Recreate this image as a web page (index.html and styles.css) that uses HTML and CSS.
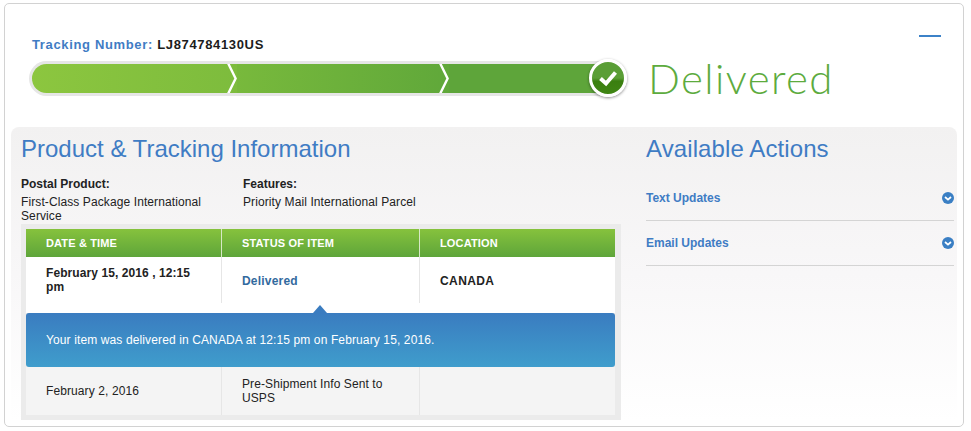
FILE: index.html
```html
<!DOCTYPE html>
<html lang="en">
<head>
  <meta charset="UTF-8">
  <title>Tracking</title>
  <link rel="stylesheet" href="styles.css">
</head>
<body>
  <div class="card">
    <div class="summary">
      <div class="summary-main">
        <div class="tracking-number"><span class="tracking-label">Tracking Number:</span> LJ874784130US</div>
        <div class="progress-row">
          <div class="progress">
            <div class="progress-fill">
              <div class="seg seg-one">
                <svg class="chevron" width="10" height="29" viewBox="0 0 10 29"><path d="M1 -1 L8.6 14.5 L1 30" fill="none" stroke="#fff" stroke-width="2.4"/></svg>
              </div>
              <div class="seg seg-two">
                <svg class="chevron" width="10" height="29" viewBox="0 0 10 29"><path d="M1 -1 L8.6 14.5 L1 30" fill="none" stroke="#fff" stroke-width="2.4"/></svg>
              </div>
              <div class="seg seg-three"></div>
            </div>
            <div class="check">
              <svg width="20" height="17" viewBox="0 0 20 17"><path d="M2.5 8.5 L8 13.5 L17.5 2.5" fill="none" stroke="#fff" stroke-width="4"/></svg>
            </div>
          </div>
          <div class="status-big">Delivered</div>
        </div>
      </div>
      <div class="collapse-bar"></div>
    </div>

    <div class="panel">
      <div class="panel-left">
        <h2>Product &amp; Tracking Information</h2>
        <div class="product-info">
          <div class="info-one">
            <div class="info-label">Postal Product:</div>
            <div class="info-text">First-Class Package International Service</div>
          </div>
          <div class="info-two">
            <div class="info-label">Features:</div>
            <div class="info-text">Priority Mail International Parcel</div>
          </div>
        </div>
        <div class="table-wrap">
          <div class="t-row t-head">
            <div class="c1">DATE &amp; TIME</div>
            <div class="c2">STATUS OF ITEM</div>
            <div class="c3">LOCATION</div>
          </div>
          <div class="t-row t-latest">
            <div class="c1">February 15, 2016 , 12:15 pm</div>
            <div class="c2 latest-status">Delivered</div>
            <div class="c3 latest-location">CANADA</div>
          </div>
          <div class="t-message">Your item was delivered in CANADA at 12:15 pm on February 15, 2016.</div>
          <div class="t-row t-old">
            <div class="c1">February 2, 2016</div>
            <div class="c2">Pre-Shipment Info Sent to USPS</div>
            <div class="c3"></div>
          </div>
        </div>
      </div>
      <div class="panel-right">
        <h2 class="actions-title">Available Actions</h2>
        <div class="action">
          <span>Text Updates</span>
          <svg width="12" height="12" viewBox="0 0 12 12"><circle cx="6" cy="6" r="6" fill="#3a7fc4"/><path d="M3 5 L6 7.6 L9 5" fill="none" stroke="#fff" stroke-width="1.8"/></svg>
        </div>
        <div class="action">
          <span>Email Updates</span>
          <svg width="12" height="12" viewBox="0 0 12 12"><circle cx="6" cy="6" r="6" fill="#3a7fc4"/><path d="M3 5 L6 7.6 L9 5" fill="none" stroke="#fff" stroke-width="1.8"/></svg>
        </div>
      </div>
    </div>
  </div>
</body>
</html>
```

FILE: styles.css
```css
html, body {
  margin: 0;
  padding: 0;
  background: #fff;
}

body {
  padding: 3px 7px 0 4px;
  font-family: "Liberation Sans", Arial, sans-serif;
  font-size: 12px;
  color: #222;
  overflow: hidden;
}

.card {
  box-sizing: border-box;
  height: 424px;
  padding: 0 6px 0 6px;
  border: 1px solid #d2d2d2;
  border-radius: 5px;
}

.summary {
  display: flex;
  justify-content: space-between;
  height: 123px;
}

.summary-main {
  padding: 33px 0 0 18px;
}

.tracking-number {
  height: 18px;
  padding-left: 3px;
  font-size: 13px;
  font-weight: bold;
  line-height: 16px;
  letter-spacing: 0.65px;
  color: #1c1c1c;
}

.tracking-label {
  color: #3f7cc4;
}

.progress-row {
  display: flex;
  align-items: center;
  margin-top: 6px;
}

.progress {
  position: relative;
  box-sizing: border-box;
  width: 577px;
  height: 35px;
  padding: 3px 0 3px 3px;
  background: #e6e6e6;
  border-radius: 18px 0 0 18px;
}

.progress-fill {
  display: flex;
  height: 29px;
  border-radius: 15px 0 0 15px;
  overflow: hidden;
}

.seg {
  display: flex;
  justify-content: flex-end;
}

.seg-one {
  width: 205px;
  background: linear-gradient(to right, #8cc63f, #7dbc3d);
}

.seg-two {
  width: 212px;
  background: linear-gradient(to right, #78b93c, #60a83a);
}

.seg-three {
  flex: 1;
  background: #5ea53a;
}

.check {
  position: absolute;
  top: -2px;
  right: -21px;
  box-sizing: border-box;
  display: flex;
  align-items: center;
  justify-content: center;
  width: 38px;
  height: 38px;
  border: 3px solid #fff;
  border-radius: 50%;
  background: linear-gradient(to bottom, #5a9e36 0, #5a9e36 50%, #3a7f10 60%, #3f8514 100%);
  box-shadow: 0 1px 3px rgba(0, 0, 0, 0.45);
}

.status-big {
  margin-left: 42px;
  font-family: Lato, sans-serif;
  font-size: 42px;
  font-weight: 300;
  line-height: 35px;
  letter-spacing: 1.4px;
  color: #5dab3e;
}

.collapse-bar {
  width: 22px;
  height: 2px;
  margin: 31px 16px 0 0;
  background: #3c82c8;
}

.panel {
  display: flex;
  height: 294px;
  padding: 0 3px 0 10px;
  background: linear-gradient(to bottom, #f2f1f1 0, #f8f7f8 50%, #fff 100%);
  border-radius: 8px 8px 0 0;
}

.panel-left {
  width: 600px;
}

.panel-right {
  flex: 1;
  margin-left: 25px;
}

h2 {
  margin: 0;
  padding-top: 8px;
  font-size: 24px;
  font-weight: normal;
  line-height: 28px;
  color: #3f7cc4;
}

.actions-title {
  letter-spacing: 0.1px;
}

.product-info {
  box-sizing: border-box;
  display: flex;
  height: 57px;
  margin-top: 4px;
  padding-top: 9px;
}

.info-one {
  box-sizing: border-box;
  width: 222px;
  padding-right: 20px;
}

.info-label {
  margin-bottom: 3px;
  font-weight: bold;
  line-height: 16px;
}

.info-text {
  line-height: 14px;
  letter-spacing: 0.1px;
}

.table-wrap {
  box-sizing: border-box;
  width: 600px;
  height: 196px;
  padding: 5px 6px 5px 5px;
  background: #ebebeb;
}

.t-row {
  display: grid;
  grid-template-columns: 195px 198px 1fr;
}

.t-row > div {
  box-sizing: border-box;
  display: flex;
  align-items: center;
  padding: 0 20px;
}

.c2, .c3 {
  border-left: 1px solid #e6e6e6;
}

.t-head {
  height: 28px;
  background: linear-gradient(to bottom, #86c23d, #5ea53a);
  color: #fff;
  font-size: 11px;
  font-weight: bold;
  letter-spacing: 0.15px;
}

.t-head .c2, .t-head .c3 {
  border-left-color: #d7e8c6;
}

.t-latest {
  height: 46px;
  border-bottom: 10px solid #fff;
  background: #fff;
  font-weight: bold;
  letter-spacing: 0.08px;
}

.t-row .latest-status {
  padding-top: 2px;
  letter-spacing: 0.2px;
  color: #336a9e;
}

.t-row .latest-location {
  padding-top: 2px;
  letter-spacing: 0.4px;
}

.t-message {
  position: relative;
  display: flex;
  align-items: center;
  height: 54px;
  padding: 0 20px;
  border-radius: 3px;
  background: linear-gradient(to bottom, #3a7cc0, #3f9dcc);
  color: #fff;
  letter-spacing: 0.12px;
}

.t-message::before {
  content: "";
  position: absolute;
  top: -8px;
  left: 287px;
  border-left: 7px solid transparent;
  border-right: 7px solid transparent;
  border-bottom: 8px solid #3a7cc0;
}

.t-old {
  height: 48px;
  background: #f4f4f4;
  letter-spacing: 0.1px;
  line-height: 14px;
}

.action {
  box-sizing: border-box;
  display: flex;
  align-items: center;
  justify-content: space-between;
  height: 45px;
  border-bottom: 1px solid #d4d4d4;
  color: #3f7cc4;
  font-weight: bold;
}

.action:first-of-type {
  margin-top: 13px;
}
```
